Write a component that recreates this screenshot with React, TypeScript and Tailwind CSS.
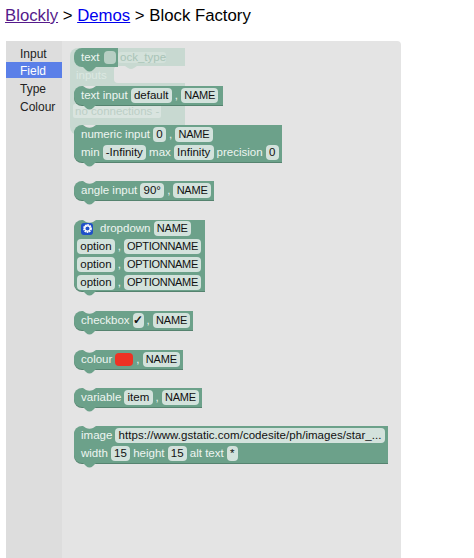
import React from "react";

const Pill = ({ children, className = "" }: { children: React.ReactNode; className?: string }) => (
  <span className={`inline-flex h-[15px] items-center rounded-[4px] bg-[#d3e2dc] px-[3.25px] text-[#111] ${className}`}>{children}</span>
);

const Name = () => <Pill className="text-[11px] tracking-[-0.2px]">NAME</Pill>;
const OptionName = () => <Pill className="!px-[3px] text-[11px] tracking-[-0.3px]">OPTIONNAME</Pill>;

const Notch = () => (
  <svg width="13" height="5" viewBox="0 0 13 5" className="absolute left-[9px] top-full">
    <path d="M0 0 L3 3 Q6.5 6 10 3 L13 0 Z" fill="#6ca18a" />
  </svg>
);

const TopNotch = () => (
  <svg width="13" height="3" viewBox="0 0 13 3" className="absolute left-[9px] top-0">
    <path d="M0 0 L3 2 Q6.5 3.5 10 2 L13 0 Z" fill="#e4e4e4" />
  </svg>
);

const Block = ({ children, className = "" }: { children: React.ReactNode; className?: string }) => (
  <div className={`relative ml-[12px] flex w-fit flex-col gap-[3px] rounded-l-[8px] bg-[#6ca18a] py-[2px] pl-[7px] pr-[3px] text-[11.5px] leading-[15px] text-[#eef5f1] shadow-[0_1px_0_#55836f] ${className}`}>
    <TopNotch />
    {children}
    <Notch />
  </div>
);

const Row = ({ children }: { children: React.ReactNode }) => (
  <div className="relative flex h-[15px] items-center gap-[3px] whitespace-nowrap">{children}</div>
);

export default function App() {
  return (
    <div className="h-[558px] w-[474px] overflow-hidden bg-white font-['Liberation_Sans',sans-serif]">
      <h1 className="h-[41px] pl-[5px] pt-[5px] text-[16.75px] leading-[22px] text-black">
        <a className="text-[#551a8b] underline">Blockly</a> &gt; <a className="text-[#0000ee] underline">Demos</a> &gt; Block Factory
      </h1>
      <div className="ml-[6px] flex h-[517px] w-[395px] rounded-tr-[4px] bg-[#e4e4e4]">
        <div className="w-[56px] bg-[#dddddd] pt-[4px] text-[12px] text-[#222]">
          <div className="flex h-[17px] items-center pl-[14px]">Input</div>
          <div className="flex h-[16px] items-center bg-[#5a7fe8] pl-[14px] pt-[1px] text-white">Field</div>
          <div className="flex h-[20px] items-center pl-[14px] pt-[1px]">Type</div>
          <div className="flex h-[17px] items-center pl-[14px]">Colour</div>
        </div>
        <div className="relative flex-1 pt-[45px]">
          <div className="absolute left-[8px] top-[7px] h-[87px] w-[115px] rounded-l-[8px] bg-[#c8d9d1]">
            <div className="absolute left-[48px] top-[4px] h-[11px] w-[48px] rounded-[3px] bg-[#d3e1da] text-[11.5px] leading-[11px] text-[#a9c4b7]">
              <span className="ml-[2px]">ock_type</span>
            </div>
            <div className="absolute left-[6px] top-[20px] h-[15px] text-[11.5px] leading-[15px] text-[#dce8e2]">inputs</div>
            <div className="absolute left-[44px] top-[18px] h-[17px] w-[71px] rounded-l-[4px] bg-[#e4e4e4]" />
            <svg width="12" height="4" viewBox="0 0 12 4" className="absolute left-[55px] top-[18px]">
              <path d="M0 0 L3 2 Q6 4 9 2 L12 0 Z" fill="#c8d9d1" />
            </svg>
            <div className="absolute left-[3px] top-[56px] rounded-[2px] bg-[#d9e4df] px-[2px] text-[11.5px] leading-[14px] text-[#bccfc6]">no connections -</div>
          </div>
          <div className="absolute left-[12px] top-[7px] flex h-[19px] w-[44px] items-center gap-[4px] rounded-l-[8px] bg-[#6ca18a] pl-[7px] text-[11.5px] text-[#eef5f1]">
            text<span className="h-[13px] w-[12px] rounded-[4px] bg-[#b7cfc4]" />
            <Notch />
          </div>
          <div className="relative flex flex-col">
            <Block className="!pr-[5px]">
              <Row>text input <Pill>default</Pill> , <Name /></Row>
            </Block>
            <Block className="mt-[20px]">
              <Row>numeric input <Pill>0</Pill> , <Name /></Row>
              <Row>min <Pill>-Infinity</Pill> max <Pill>Infinity</Pill> precision <Pill>0</Pill></Row>
            </Block>
            <Block className="mt-[19px]">
              <Row>angle input <Pill>90°</Pill> , <Name /></Row>
            </Block>
            <Block className="mt-[20px] !py-[1px] !pl-[3px] !pr-[4px]">
              <Row>
                <span className="ml-[4px] mr-[4px] flex h-[12px] w-[12px] items-center justify-center rounded-[3px] bg-[#1f50c8]">
                  <svg width="9" height="9" viewBox="0 0 9 9">
                    <circle cx="4.5" cy="4.5" r="3.4" fill="none" stroke="#fff" strokeWidth="2" strokeDasharray="1.6 0.6" />
                    <circle cx="4.5" cy="4.5" r="2.7" fill="none" stroke="#fff" strokeWidth="1.2" />
                  </svg>
                </span>
                dropdown <Name />
              </Row>
              <Row><Pill>option</Pill> , <OptionName /></Row>
              <Row><Pill>option</Pill> , <OptionName /></Row>
              <Row><Pill>option</Pill> , <OptionName /></Row>
            </Block>
            <Block className="mt-[20px]">
              <Row>checkbox <Pill className="!w-[11px] justify-center !px-0 font-bold">✓</Pill> , <Name /></Row>
            </Block>
            <Block className="mt-[20px]">
              <Row>colour <span className="h-[13px] w-[18px] rounded-[4px] bg-[#ee3224]" /> , <Name /></Row>
            </Block>
            <Block className="mt-[19px]">
              <Row>variable <Pill>item</Pill> , <Name /></Row>
            </Block>
            <Block className="mt-[19px]">
              <Row>image <Pill className="tracking-[0.04px]">https://www.gstatic.com/codesite/ph/images/star_...</Pill></Row>
              <Row>width <Pill>15</Pill> height <Pill>15</Pill> alt text <Pill>*</Pill></Row>
            </Block>
          </div>
        </div>
      </div>
    </div>
  );
}
